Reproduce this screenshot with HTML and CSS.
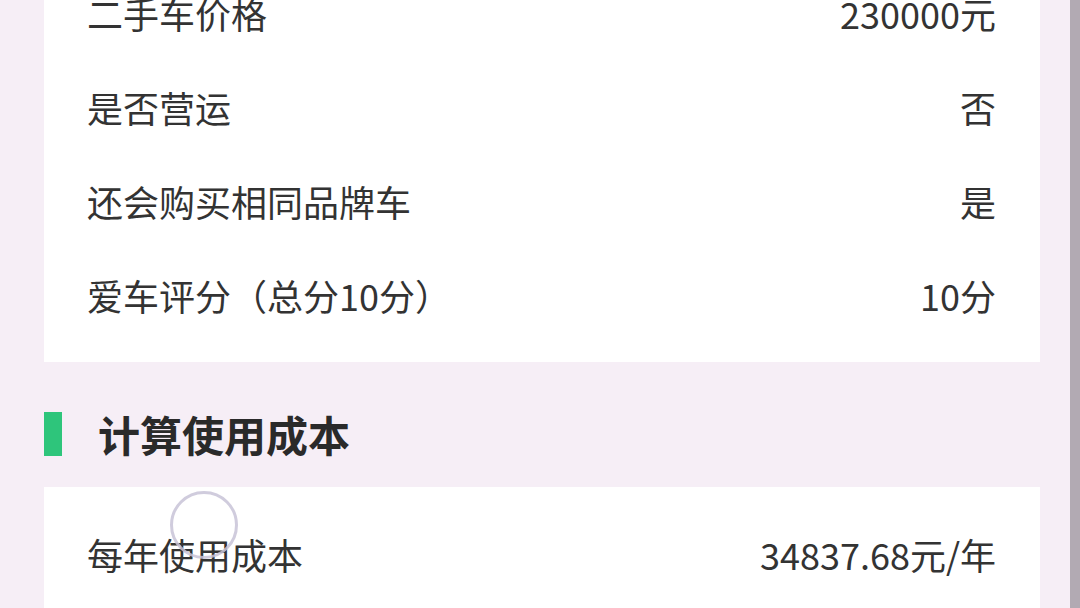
FILE: index.html
```html
<!DOCTYPE html>
<html lang="zh-CN">
<head>
<meta charset="utf-8">
<link rel="stylesheet" href="styles.css">
</head>
<body>
<div class="screen">
  <div class="content">
    <div class="card card-first">
      <div class="row"><span>二手车价格</span><span>230000元</span></div>
      <div class="row"><span>是否营运</span><span>否</span></div>
      <div class="row"><span>还会购买相同品牌车</span><span>是</span></div>
      <div class="row"><span>爱车评分（总分10分）</span><span>10分</span></div>
    </div>
    <div class="section-title"><i class="bar"></i><h2>计算使用成本</h2></div>
    <div class="card card-last">
      <div class="row"><span>每年使用成本</span><span>34837.68元/年</span></div>
    </div>
    <div class="touch"></div>
  </div>
  <div class="strip"></div>
</div>
</body>
</html>
```

FILE: styles.css
```css
html, body {
  margin: 0;
  padding: 0;
  height: 608px;
  overflow: hidden;
  background: #f6eef6;
  font-family: "Noto Sans CJK SC", "Noto Sans", sans-serif;
  color: #333333;
}
.screen {
  display: flex;
  height: 608px;
}
.content {
  flex: 1;
  padding: 0 30px 0 44px;
  position: relative;
}
.strip {
  width: 10px;
  background: #b2aab3;
}
.card {
  background: #ffffff;
  padding: 20px 44px 20px 43px;
}
.card-first {
  margin-top: -54px;
}
.card-last {
  min-height: 200px;
}
.row {
  height: 94px;
  display: flex;
  align-items: center;
  justify-content: space-between;
  font-size: 36px;
  line-height: 1;
}
.section-title {
  height: 107px;
  padding-top: 18px;
  display: flex;
  align-items: center;
}
.bar {
  width: 18px;
  height: 44px;
  background: #2ec57b;
  margin-right: 36px;
}
.section-title h2 {
  margin: 0;
  font-size: 42px;
  font-weight: 700;
  color: #2a2a2a;
}
.touch {
  position: absolute;
  left: 170px;
  top: 491px;
  width: 62px;
  height: 62px;
  border: 3px solid rgba(200, 195, 215, 0.85);
  border-radius: 50%;
}
```
